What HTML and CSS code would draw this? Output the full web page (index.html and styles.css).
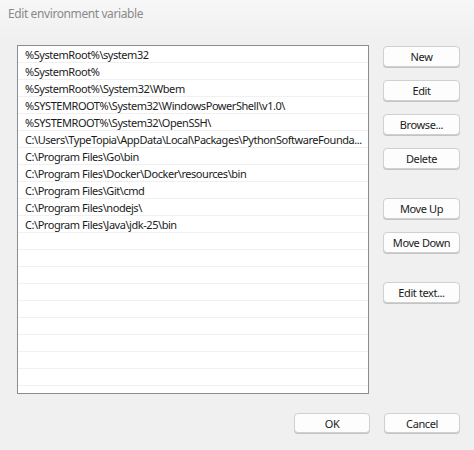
FILE: index.html
```html
<!DOCTYPE html>
<html lang="en">
<head>
<meta charset="utf-8">
<title>Edit environment variable</title>
<link rel="stylesheet" href="styles.css">
</head>
<body>
<div class="dialog">
  <div class="titlebar">Edit environment variable</div>
  <div class="content">
    <div class="pathlist">
      <div class="row">%SystemRoot%\system32</div>
      <div class="row">%SystemRoot%</div>
      <div class="row">%SystemRoot%\System32\Wbem</div>
      <div class="row">%SYSTEMROOT%\System32\WindowsPowerShell\v1.0\</div>
      <div class="row">%SYSTEMROOT%\System32\OpenSSH\</div>
      <div class="row">C:\Users\TypeTopia\AppData\Local\Packages\PythonSoftwareFounda...</div>
      <div class="row">C:\Program Files\Go\bin</div>
      <div class="row">C:\Program Files\Docker\Docker\resources\bin</div>
      <div class="row">C:\Program Files\Git\cmd</div>
      <div class="row">C:\Program Files\nodejs\</div>
      <div class="row">C:\Program Files\Java\jdk-25\bin</div>
      <div class="row"></div>
      <div class="row"></div>
      <div class="row"></div>
      <div class="row"></div>
      <div class="row"></div>
      <div class="row"></div>
      <div class="row"></div>
      <div class="row"></div>
      <div class="row"></div>
      <div class="row"></div>
      <div class="row"></div>
      <div class="row"></div>
      <div class="row"></div>
      <div class="row"></div>
      <div class="row"></div>
      <div class="row"></div>
      <div class="row"></div>
      <div class="row"></div>
      <div class="row"></div>
    </div>
    <div class="actions">
      <button class="btn">New</button>
      <button class="btn">Edit</button>
      <button class="btn">Browse...</button>
      <button class="btn">Delete</button>
      <button class="btn group">Move Up</button>
      <button class="btn">Move Down</button>
      <button class="btn group">Edit text...</button>
    </div>
  </div>
  <div class="footer">
    <button class="btn wide">OK</button>
    <button class="btn wide">Cancel</button>
  </div>
</div>
</body>
</html>
```
FILE: styles.css
```css
html, body {
  margin: 0;
  padding: 0;
}

body {
  width: 474px;
  height: 450px;
  overflow: hidden;
  background: #f0f0f0;
  font-family: "Segoe UI", "Noto Sans", "Open Sans", sans-serif;
  font-size: 11px;
  letter-spacing: -0.4px;
  color: #1b1b1b;
}

.dialog {
  height: 450px;
  display: flex;
  flex-direction: column;
  background: linear-gradient(to bottom, #f7f7f7 0, #f0f0f0 40px);
}

.titlebar {
  height: 45px;
  padding: 5px 0 0 8px;
  box-sizing: border-box;
  font-size: 12px;
  color: #8a8a8a;
}

.content {
  display: flex;
  align-items: flex-start;
  padding-left: 17px;
}

.pathlist {
  width: 350px;
  height: 347px;
  border: 1px solid #8c8c8c;
  background: #ffffff;
  overflow: hidden;
}

.row {
  height: 14px;
  line-height: 14px;
  padding: 2px 0 0 7px;
  border-bottom: 1px solid #f0f0f0;
  white-space: nowrap;
  overflow: hidden;
  letter-spacing: -0.45px;
}

.actions {
  display: flex;
  flex-direction: column;
  gap: 13px;
  margin-left: 14px;
  padding-top: 1px;
}

.btn {
  width: 77px;
  height: 21px;
  padding: 0;
  border: 1px solid #d0d0d0;
  border-radius: 4px;
  background: #fdfdfd;
  font: inherit;
  letter-spacing: inherit;
  color: #1b1b1b;
  box-shadow: 0 1px 0 #c4c4c4;
}

.btn.group {
  margin-top: 16px;
}

.footer {
  display: flex;
  justify-content: flex-end;
  gap: 14px;
  padding: 19px 14px 0 0;
}

.btn.wide {
  width: 76px;
  height: 20px;
}
```
